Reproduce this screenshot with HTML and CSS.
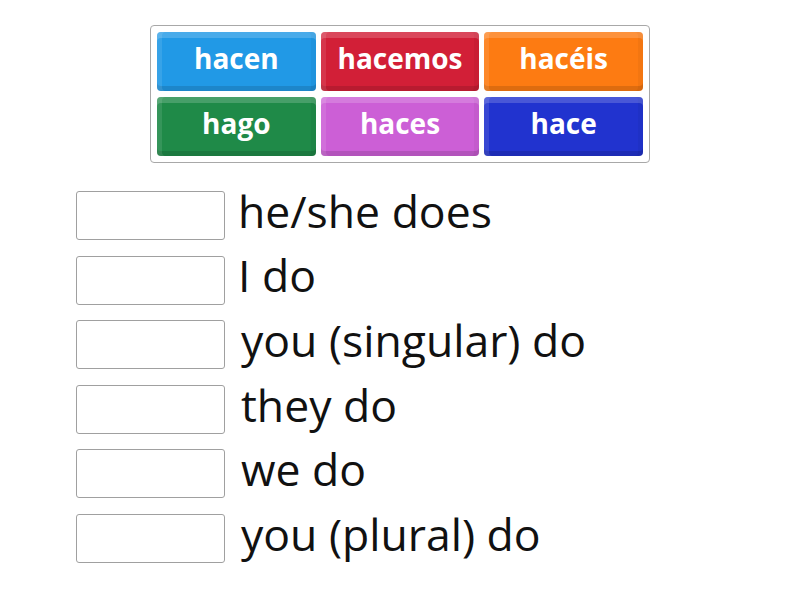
FILE: index.html
```html
<!DOCTYPE html>
<html>
<head>
  <link rel="stylesheet" href="styles.css">
</head>
<body>
  <div class="bank">
    <div class="tile tile-blue">hacen</div>
    <div class="tile tile-red">hacemos</div>
    <div class="tile tile-orange">hacéis</div>
    <div class="tile tile-green">hago</div>
    <div class="tile tile-purple">haces</div>
    <div class="tile tile-navy">hace</div>
  </div>

  <div class="answers">
    <div class="answer">
      <div class="slot"></div>
      <div class="prompt">he/she does</div>
    </div>
    <div class="answer">
      <div class="slot"></div>
      <div class="prompt">I do</div>
    </div>
    <div class="answer">
      <div class="slot"></div>
      <div class="prompt shift">you (singular) do</div>
    </div>
    <div class="answer">
      <div class="slot"></div>
      <div class="prompt shift">they do</div>
    </div>
    <div class="answer">
      <div class="slot"></div>
      <div class="prompt shift">we do</div>
    </div>
    <div class="answer">
      <div class="slot"></div>
      <div class="prompt shift">you (plural) do</div>
    </div>
  </div>
</body>
</html>
```

FILE: styles.css
```css
body {
  margin: 0;
  font-family: 'Open Sans', 'Noto Sans', sans-serif;
  background-color: #ffffff;
  color: #111111;
}

.bank {
  width: 486px;
  margin: 25px auto 0;
  padding: 6px;
  border: 1px solid #a8a8a8;
  border-radius: 4px;
  display: grid;
  grid-template-columns: repeat(3, 1fr);
  column-gap: 5px;
  row-gap: 6px;
}

.tile {
  height: 59px;
  box-sizing: border-box;
  border-radius: 4px;
  display: flex;
  justify-content: center;
  align-items: center;
  color: #ffffff;
  font-size: 28px;
  font-weight: 700;
  padding-bottom: 7px;
  box-shadow: inset 0 6px 0 rgba(255,255,255,0.18), inset 5px 0 0 rgba(255,255,255,0.1), inset -5px 0 0 rgba(0,0,0,0.04), inset 0 -5px 0 rgba(0,0,0,0.12);
}

.tile-blue { background-color: #2199e6; }
.tile-red { background-color: #d21f37; }
.tile-orange { background-color: #fd7b12; }
.tile-green { background-color: #1f8a48; }
.tile-purple { background-color: #cc5fd6; }
.tile-navy { background-color: #2133cf; }

.answers {
  margin: 28px 0 0 76px;
  display: flex;
  flex-direction: column;
  gap: 15.6px;
}

.answer {
  display: flex;
  align-items: center;
  height: 49px;
}

.slot {
  width: 149px;
  height: 49px;
  box-sizing: border-box;
  border: 1px solid #a0a0a0;
  border-radius: 3px;
  background-color: #ffffff;
  flex-shrink: 0;
}

.prompt {
  font-size: 44.5px;
  padding-left: 13px;
  line-height: 1;
  padding-bottom: 9px;
}

.prompt.shift {
  padding-left: 16px;
}
```
